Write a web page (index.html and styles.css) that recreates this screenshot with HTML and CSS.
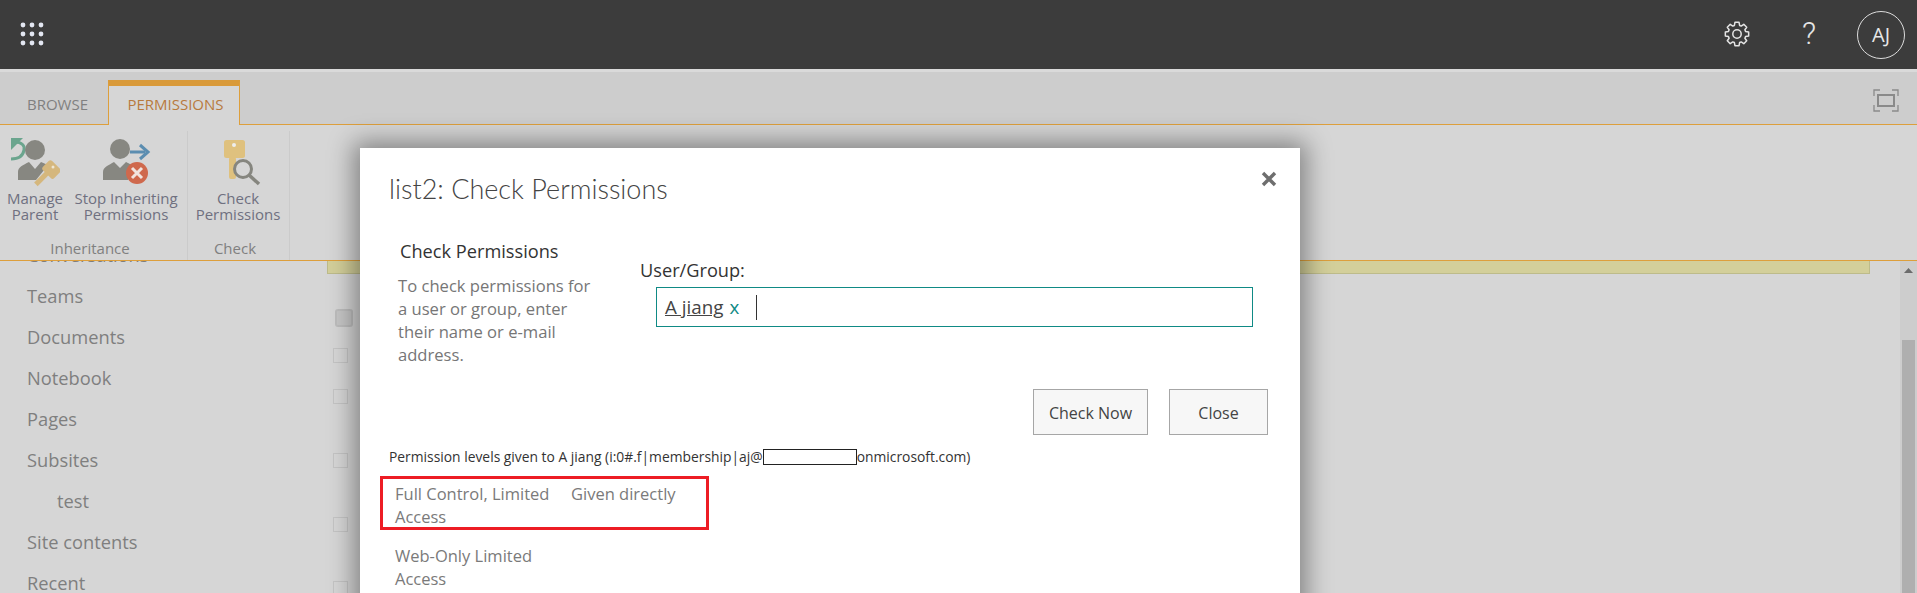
FILE: index.html
```html
<!DOCTYPE html>
<html lang="en">
<head>
<meta charset="utf-8">
<title>list2: Check Permissions</title>
<link rel="stylesheet" href="styles.css">
</head>
<body>
<div class="app">
  <header class="topbar">
    <svg class="waffle" width="24" height="24" viewBox="0 0 24 24"><g fill="#e3e7f2"><circle cx="3" cy="3" r="2.4"/><circle cx="12" cy="3" r="2.4"/><circle cx="21" cy="3" r="2.4"/><circle cx="3" cy="12" r="2.4"/><circle cx="12" cy="12" r="2.4"/><circle cx="21" cy="12" r="2.4"/><circle cx="3" cy="21" r="2.4"/><circle cx="12" cy="21" r="2.4"/><circle cx="21" cy="21" r="2.4"/></g></svg>
    <div class="top-actions">
      <svg class="gear" width="28" height="28" viewBox="-13 -13 26 26"><polygon fill="none" stroke="#e4e4e4" stroke-width="1.4" stroke-linejoin="round" points="7.94,-2.43 10.83,-1.91 10.83,1.91 7.94,2.43 7.33,3.9 9.01,6.31 6.31,9.01 3.9,7.33 2.43,7.94 1.91,10.83 -1.91,10.83 -2.43,7.94 -3.9,7.33 -6.31,9.01 -9.01,6.31 -7.33,3.9 -7.94,2.43 -10.83,1.91 -10.83,-1.91 -7.94,-2.43 -7.33,-3.9 -9.01,-6.31 -6.31,-9.01 -3.9,-7.33 -2.43,-7.94 -1.91,-10.83 1.91,-10.83 2.43,-7.94 3.9,-7.33 6.31,-9.01 9.01,-6.31 7.33,-3.9"/><circle r="3.9" fill="none" stroke="#e4e4e4" stroke-width="1.4"/></svg>
      <span class="help">?</span>
      <span class="avatar">AJ</span>
    </div>
  </header>
  <div class="strip"></div>
  <div class="ribbon">
    <div class="tabs">
      <span class="tab">BROWSE</span>
      <span class="tab tab-active">PERMISSIONS</span>
      <svg class="focus" width="26" height="23" viewBox="0 0 26 23"><path d="M1 7V1H7M19 1H25V7M25 16V22H19M7 22H1V16" fill="none" stroke="#8a8a8a" stroke-width="1.3"/><rect x="5" y="6" width="16" height="11" fill="none" stroke="#8a8a8a" stroke-width="2"/></svg>
    </div>
    <div class="commands">
      <section class="group group-inherit">
        <div class="group-buttons">
          <div class="cmd cmd-manage">
            <svg width="50" height="52" viewBox="0 0 50 52"><path d="M5 6C12 6 15 10 14 14C13 20 8 23 1 23" fill="none" stroke="#6ba58e" stroke-width="3"/><path d="M1 2H13L1 14Z" fill="#6ba58e"/><circle cx="25" cy="14" r="10" fill="#878781"/><path d="M8 44V36C8 31 13 29 19 26L25 33L31 26L38 29L26 44Z" fill="#878781"/><g transform="rotate(45 39 36)" fill="#d5b77d"><rect x="31" y="26" width="16" height="13" rx="2.5"/><rect x="36" y="38" width="5" height="16"/></g><circle cx="43" cy="31" r="1.5" fill="#efe6d2"/></svg>
            <span>Manage<br>Parent</span>
          </div>
          <div class="cmd cmd-stop">
            <svg width="50" height="52" viewBox="0 0 50 52"><circle cx="19" cy="13" r="10" fill="#878781"/><path d="M2 44V36C2 31 8 29 13 26L19 32L25 26L31 29L27 44Z" fill="#878781"/><path d="M29 16H44" stroke="#5b8db0" stroke-width="3"/><path d="M39 9L47 16L39 23" fill="none" stroke="#5b8db0" stroke-width="3"/><circle cx="36" cy="37" r="11" fill="#cf694d"/><path d="M31 32L41 42M41 32L31 42" stroke="#f1e4df" stroke-width="3"/></svg>
            <span>Stop Inheriting<br>Permissions</span>
          </div>
        </div>
        <div class="group-label">Inheritance</div>
      </section>
      <section class="group group-check">
        <div class="group-buttons">
          <div class="cmd cmd-check">
            <svg width="50" height="52" viewBox="0 0 50 52"><rect x="7" y="4" width="21" height="18" rx="2.5" fill="#dfc17e"/><rect x="12" y="21" width="7" height="22" rx="2" fill="#dfc17e"/><circle cx="17" cy="9" r="2" fill="#eee"/><circle cx="26" cy="33" r="8.5" fill="#d6d6d6" stroke="#86867f" stroke-width="3"/><path d="M32 39L42 48" stroke="#86867f" stroke-width="3.5"/></svg>
            <span>Check<br>Permissions</span>
          </div>
        </div>
        <div class="group-label">Check</div>
      </section>
    </div>
  </div>
  <div class="page">
    <nav class="nav">
      <a>Conversations</a>
      <a>Teams</a>
      <a>Documents</a>
      <a>Notebook</a>
      <a>Pages</a>
      <a>Subsites</a>
      <a class="sub">test</a>
      <a>Site contents</a>
      <a>Recent</a>
    </nav>
    <main class="main">
      <div class="notice"></div>
      <div class="checks">
        <span class="check check-head"></span>
        <span class="check check-1"></span>
        <span class="check check-2"></span>
        <span class="check check-3"></span>
        <span class="check check-4"></span>
        <span class="check check-5"></span>
      </div>
    </main>
    <div class="scrollbar">
      <svg class="scroll-up" width="9" height="5" viewBox="0 0 9 5"><path d="M4.5 0L9 5H0Z" fill="#6b6b6b"/></svg>
      <div class="thumb"></div>
    </div>
  </div>
  <div class="modal">
    <h1 class="modal-title">list2: Check Permissions</h1>
    <svg class="modal-close" width="16" height="16" viewBox="0 0 16 16"><path d="M2 2L14 14M14 2L2 14" stroke="#6e6e6e" stroke-width="3.4"/></svg>
    <div class="form-row">
      <div class="form-side">
        <h2>Check Permissions</h2>
        <p>To check permissions for a user or group, enter their name or e-mail address.</p>
      </div>
      <div class="form-field">
        <label>User/Group:</label>
        <div class="picker"><span class="person">A jiang</span><span class="remove">x</span><span class="caret"></span></div>
      </div>
    </div>
    <div class="actions">
      <button class="btn btn-check">Check Now</button>
      <button class="btn btn-close">Close</button>
    </div>
    <div class="levels-title">Permission levels given to A jiang (i:0#.f|membership|aj@<span class="redact"></span>onmicrosoft.com)</div>
    <div class="level level-boxed"><span class="level-name">Full Control, Limited Access</span><span class="level-how">Given directly</span></div>
    <div class="level"><span class="level-name">Web-Only Limited Access</span></div>
  </div>
</div>
</body>
</html>
```
FILE: styles.css
```css
* { box-sizing: border-box; }
html, body { margin: 0; padding: 0; }
body { font-family: "Open Sans", "Liberation Sans", sans-serif; background: #d6d6d6; overflow: hidden; }
.app { position: relative; width: 1917px; height: 593px; overflow: hidden; display: flex; flex-direction: column; }

.topbar { height: 69px; flex: none; background: #3c3c3c; display: flex; align-items: center; justify-content: space-between; padding: 0 12px 0 20px; }
.waffle { margin-top: -2px; }
.top-actions { display: flex; align-items: center; }
.gear { margin-right: 51px; margin-top: -1px; }
.help { font-family: "Roboto", sans-serif; font-weight: 300; font-size: 31px; color: #e4e4e4; margin-right: 41px; line-height: 1; margin-top: -2px; }
.avatar { width: 48px; height: 48px; border: 1px solid #dcdcdc; border-radius: 50%; color: #e8e8e8; font-size: 20px; display: flex; align-items: center; justify-content: center; }

.strip { height: 3px; flex: none; background: #dadada; }
.ribbon { flex: none; position: relative; z-index: 2; background: #d6d6d6; border-bottom: 1px solid #dd9f3c; height: 189px; }
.tabs { height: 53px; background: #cdcdcd; border-bottom: 1px solid #dd9f3c; display: flex; align-items: flex-end; position: relative; }
.tab { font-size: 15px; color: #808080; height: 44px; line-height: 48px; text-align: center; }
.tab:first-child { width: 108px; padding-left: 7px; }
.tab-active { width: 132px; height: 45px; line-height: 36px; margin-bottom: -1px; padding-left: 3px; background: #d6d6d6; color: #b87a3e; border: 1px solid #dd9f3c; border-top: 6px solid #d99a3a; border-bottom: 0; }
.focus { position: absolute; right: 18px; top: 17px; }

.commands { display: flex; height: 135px; }
.group { display: flex; flex-direction: column; border-right: 1px solid #cbcbcb; margin-top: 6px; height: 129px; }
.group-inherit { width: 188px; }
.group-check { width: 102px; }
.group-buttons { display: flex; height: 107px; padding-top: 4px; }
.group-label { font-size: 15px; color: #808080; text-align: center; line-height: 20px; padding-right: 7px; }
.cmd { display: flex; flex-direction: column; align-items: center; font-size: 15px; line-height: 16px; color: #6f7080; text-align: center; white-space: nowrap; }
.cmd svg { flex: none; margin: 1px 0 2px; }
.cmd-manage { width: 70px; }
.cmd-stop { width: 106px; margin-left: 3px; }
.cmd-check { width: 100px; }
.cmd-check svg { margin-left: 8px; }

.page { flex: 1; min-height: 0; display: flex; overflow: hidden; }
.nav { width: 327px; flex: none; display: flex; flex-direction: column; margin-top: -27px; padding-left: 27px; font-size: 18.3px; color: #7f7f7f; }
.nav a { height: 41px; line-height: 41px; flex: none; }
.nav .sub { padding-left: 30px; }
.main { flex: 1; min-width: 0; }
.notice { width: 1543px; height: 13px; background: #d3cf9a; border: 1px solid #bdbb8a; border-top: 0; }
.checks { display: flex; flex-direction: column; padding-left: 6px; }
.check { display: block; width: 15px; height: 15px; border: 1px solid #c4c4c4; background: #d6d6d6; flex: none; }
.check-head { width: 18px; height: 18px; margin: 35px 0 0 2px; border: 2px solid #bdbdbd; border-radius: 3px; background: #c6c6c6; }
.check-1 { margin-top: 21px; }
.check-2 { margin-top: 26px; }
.check-3 { margin-top: 49px; }
.check-4 { margin-top: 49px; }
.check-5 { margin-top: 49px; }
.scrollbar { width: 17px; flex: none; background: #cdcdcd; display: flex; flex-direction: column; align-items: center; }
.scroll-up { margin-top: 7px; flex: none; }
.thumb { flex: none; width: 13px; height: 260px; margin-top: 67px; background: #afafaf; }

.modal { position: absolute; z-index: 3; left: 360px; top: 148px; width: 940px; height: 470px; background: #fff; box-shadow: 0 0 24px 6px rgba(0, 0, 0, .4); padding: 23px 29px 0 29px; }
.modal-title { margin: 0; font-family: "Lato", "Open Sans", sans-serif; font-size: 27px; line-height: 36px; font-weight: 300; color: #444; }
.modal-close { position: absolute; right: 23px; top: 23px; }
.form-row { display: flex; margin-top: 32px; }
.form-side { width: 251px; padding-left: 10px; flex: none; }
.form-side h2 { margin: 0 0 11px 1px; font-size: 18.2px; line-height: 24px; font-weight: 400; color: #333; }
.form-side p { margin: 0 0 0 -1px; width: 200px; font-size: 16.6px; line-height: 23px; color: #767676; }
.form-field { flex: none; width: 612px; }
.form-field label { display: block; font-size: 18.2px; line-height: 24px; color: #333; margin-top: 19px; }
.picker { margin: 5px 0 0 16px; width: 597px; height: 40px; border: 1px solid #0f8a85; display: flex; align-items: center; padding-left: 8px; font-size: 18.8px; }
.person { color: #444; text-decoration: underline; }
.remove { color: #0f8a85; margin-left: 6px; }
.caret { width: 1px; height: 25px; background: #333; margin-left: 17px; }
.actions { display: flex; justify-content: flex-end; gap: 21px; margin: 23px 3px 0 0; }
.btn { height: 46px; border: 1px solid #a6a6a6; background: #f7f7f7; font-family: inherit; font-size: 16px; color: #444; padding: 2px 0 0; }
.btn-check { width: 115px; }
.btn-close { width: 99px; }
.levels-title { margin-top: 12px; font-size: 13.85px; line-height: 20px; color: #333; white-space: nowrap; }
.redact { display: inline-block; width: 94px; height: 16px; background: #fff; border: 1px solid #222; vertical-align: -3px; }
.level { display: flex; padding: 3px 0 0 6px; font-size: 16.5px; line-height: 23px; color: #7a7a7a; }
.level-boxed { width: 329px; height: 54px; margin: 9px 0 0 -9px; padding: 3px 0 0 12px; border: 3px solid #ed1c24; }
.level-name { width: 176px; flex: none; }
.level-boxed + .level { margin-top: 11px; }
```
